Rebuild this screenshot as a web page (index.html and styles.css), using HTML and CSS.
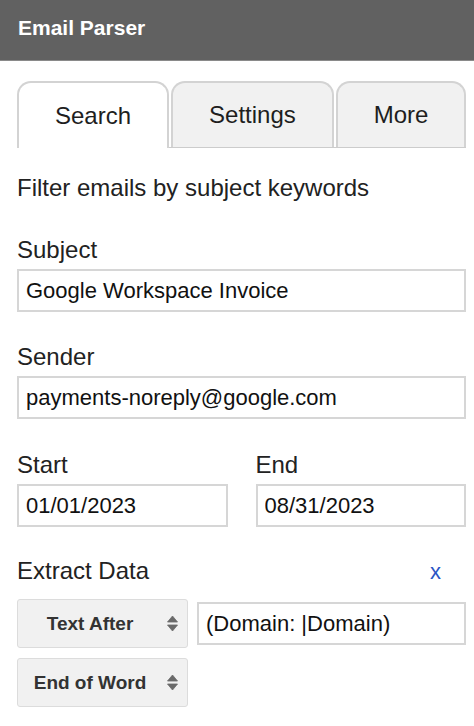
FILE: index.html
```html
<!DOCTYPE html>
<html lang="en">
<head>
    <meta charset="UTF-8">
    <meta name="viewport" content="width=device-width, initial-scale=1.0">
    <title>Email Parser</title>
    <link rel="stylesheet" href="styles.css">
</head>
<body>
    <div class="app-header">Email Parser</div>

    <div class="sidebar">
        <!-- Tabs -->
        <div class="tabs">
            <div class="tab active">Search</div>
            <div class="tab">Settings</div>
            <div class="tab">More</div>
        </div>

        <p class="hint">Filter emails by subject keywords</p>

        <div class="field first">
            <label class="field-label">Subject</label>
            <input class="text-input" type="text" value="Google Workspace Invoice">
        </div>

        <div class="field">
            <label class="field-label">Sender</label>
            <input class="text-input" type="text" value="payments-noreply@google.com">
        </div>

        <div class="date-row">
            <div class="field">
                <label class="field-label">Start</label>
                <input class="text-input" type="text" value="01/01/2023">
            </div>
            <div class="field">
                <label class="field-label">End</label>
                <input class="text-input" type="text" value="08/31/2023">
            </div>
        </div>

        <!-- Extract rules -->
        <div class="extract-head">
            <span class="extract-title">Extract Data</span>
            <a class="remove-link" href="#">x</a>
        </div>
        <div class="extract-row">
            <div class="select-box">
                <span>Text After</span>
                <svg class="arrows" width="11" height="17" viewBox="0 0 11 17"><path d="M5.5 1 L10.5 7 H0.5 Z M5.5 16 L10.5 10 H0.5 Z" fill="#6a6a6a" stroke="#6a6a6a" stroke-width="0.8" stroke-linejoin="round"/></svg>
            </div>
            <input class="text-input rule-input" type="text" value="(Domain: |Domain)">
        </div>
        <div class="extract-row">
            <div class="select-box">
                <span>End of Word</span>
                <svg class="arrows" width="11" height="17" viewBox="0 0 11 17"><path d="M5.5 1 L10.5 7 H0.5 Z M5.5 16 L10.5 10 H0.5 Z" fill="#6a6a6a" stroke="#6a6a6a" stroke-width="0.8" stroke-linejoin="round"/></svg>
            </div>
        </div>
    </div>
</body>
</html>
```

FILE: styles.css
```css
* {
    margin: 0;
    padding: 0;
    box-sizing: border-box;
}

body {
    font-family: 'Liberation Sans', Arial, sans-serif;
    color: #222;
    background: #fff;
}

.app-header {
    height: 61px;
    background: #616161;
    border-bottom: 1px solid #8a8a8a;
    color: #fff;
    font-weight: 700;
    font-size: 21px;
    padding: 16px 0 0 18px;
}

.sidebar {
    padding: 20px 8px 0 17px;
}

.tabs {
    display: flex;
    gap: 2px;
    height: 67px;
    border-bottom: 1px solid #ccc;
}

.tab {
    display: flex;
    align-items: center;
    justify-content: center;
    padding: 0 36px;
    font-size: 24px;
    color: #1e1e1e;
    background: #f1f1f1;
    border: 2px solid #d3d3d3;
    border-bottom: none;
    border-radius: 14px 14px 0 0;
}

.tab.active {
    background: #fff;
    margin-bottom: -1px;
}

.hint {
    font-size: 24px;
    margin-top: 26px;
}

.field {
    display: flex;
    flex-direction: column;
    margin-top: 31px;
}

.field.first {
    margin-top: 34px;
}

.date-row .field {
    flex: 1;
    margin-top: 32px;
}

.field-label {
    font-size: 24px;
    margin-bottom: 5px;
}

.text-input {
    height: 43px;
    width: 100%;
    border: 2px solid #d6d6d6;
    font-family: 'Liberation Sans', Arial, sans-serif;
    font-size: 22px;
    color: #111;
    padding: 0 7px;
    outline: none;
}

.date-row {
    display: flex;
    gap: 28px;
}

.extract-head {
    display: flex;
    justify-content: space-between;
    align-items: baseline;
    margin-top: 30px;
    padding-right: 25px;
}

.extract-title {
    font-size: 24px;
}

.remove-link {
    color: #2a55c4;
    text-decoration: none;
    font-size: 22px;
}

.extract-row {
    display: flex;
    align-items: center;
    gap: 9px;
    margin-top: 14px;
}

.extract-row + .extract-row {
    margin-top: 10px;
}

.select-box {
    flex: none;
    width: 171px;
    height: 49px;
    display: flex;
    align-items: center;
    padding: 0 9px 0 6px;
    background: #f1f1f1;
    border: 1px solid #dcdcdc;
    border-radius: 3px;
    font-weight: 700;
    font-size: 19px;
    color: #333;
}

.select-box span {
    flex: 1;
    text-align: center;
}

.arrows {
    margin-left: 11px;
}

.rule-input {
    height: 43px;
    flex: 1;
}
```
